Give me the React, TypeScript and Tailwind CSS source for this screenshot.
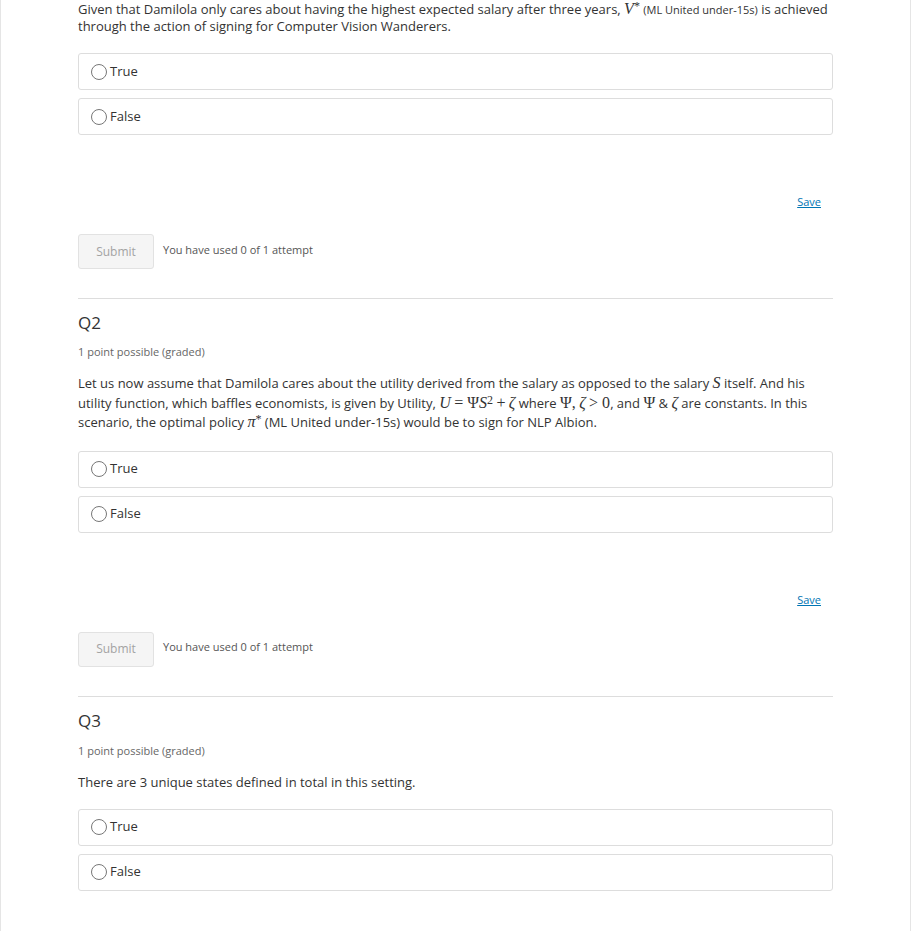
import React from "react";

const serif = { fontFamily: '"Liberation Serif", "DejaVu Serif", serif' };

const M: React.FC<{ children: React.ReactNode; italic?: boolean }> = ({ children, italic = true }) => (
  <span className={`text-[16px] leading-none ${italic ? "italic" : ""}`} style={serif}>
    {children}
  </span>
);

const Sup: React.FC<{ children: React.ReactNode }> = ({ children }) => (
  <span className="relative -top-[4px] text-[12px] leading-none" style={serif}>
    {children}
  </span>
);

const Option: React.FC<{ label: string }> = ({ label }) => (
  <div className="flex items-center h-[37px] border border-[#ddd] rounded-[3px] px-[12px]">
    <span className="w-[16px] h-[16px] rounded-full border border-[#777] shrink-0" />
    <span className="ml-[3px] text-[13px] text-[#333]">{label}</span>
  </div>
);

const Actions: React.FC = () => (
  <>
    <div className="flex justify-end pr-[12px] mt-[59px] leading-[15px]">
      <a href="#" className="text-[11px] text-[#0075b4] underline">Save</a>
    </div>
    <div className="flex items-center mt-[25px]">
      <button className="w-[76px] h-[35px] bg-[#f5f5f5] border border-[#e2e2e2] rounded-[3px] text-[12px] text-[#a3a3a3]">
        Submit
      </button>
      <span className="ml-[9px] text-[11px] text-[#555] -mt-[3px]">You have used 0 of 1 attempt</span>
    </div>
  </>
);

export default function App() {
  return (
    <div
      className="min-h-[931px] w-[911px] bg-white border-l border-r border-[#e5e5e5]"
      style={{ fontFamily: '"Open Sans", "Liberation Sans", sans-serif' }}
    >
      <div className="ml-[77px] w-[755px]">
        {/* Q1 tail */}
        <p className="text-[13px] leading-[17px] text-[#333] pt-[1px]">
          Given that Damilola only cares about having the highest expected salary after three years,{" "}
          <M>V</M>
          <Sup>*</Sup> <span className="text-[11px] leading-none">(ML United under-15s)</span> is achieved through
          the action of signing for Computer Vision Wanderers.
        </p>
        <div className="flex flex-col gap-[8px] mt-[18px]">
          <Option label="True" />
          <Option label="False" />
        </div>
        <Actions />
        <div className="border-t border-[#ddd] mt-[29px]" />

        {/* Q2 */}
        <h3 className="text-[17px] text-[#333] mt-[13px] leading-[22px]">Q2</h3>
        <div className="text-[11px] leading-[15px] text-[#666] mt-[10px]">1 point possible (graded)</div>
        <p className="text-[13px] leading-[19.5px] text-[#333] mt-[15px]">
          Let us now assume that Damilola cares about the utility derived from the salary as opposed to the salary{" "}
          <M>S</M> itself. And his utility function, which baffles economists, is given by Utility,{" "}
          <M>U</M> <M italic={false}>= Ψ</M>
          <M>S</M>
          <Sup>2</Sup> <M italic={false}>+</M> <M>ζ</M> where <M italic={false}>Ψ,</M> <M>ζ</M>{" "}
          <M italic={false}>&gt; 0</M>, and <M italic={false}>Ψ</M> &amp; <M>ζ</M> are constants. In this scenario,
          the optimal policy <M>π</M>
          <Sup>*</Sup> (ML United under-15s) would be to sign for NLP Albion.
        </p>
        <div className="flex flex-col gap-[8px] mt-[18px]">
          <Option label="True" />
          <Option label="False" />
        </div>
        <Actions />
        <div className="border-t border-[#ddd] mt-[29px]" />

        {/* Q3 */}
        <h3 className="text-[17px] text-[#333] mt-[13px] leading-[22px]">Q3</h3>
        <div className="text-[11px] leading-[15px] text-[#666] mt-[11px]">1 point possible (graded)</div>
        <p className="text-[13px] leading-[19px] text-[#333] mt-[15px]">
          There are 3 unique states defined in total in this setting.
        </p>
        <div className="flex flex-col gap-[8px] mt-[17px]">
          <Option label="True" />
          <Option label="False" />
        </div>
      </div>
    </div>
  );
}
